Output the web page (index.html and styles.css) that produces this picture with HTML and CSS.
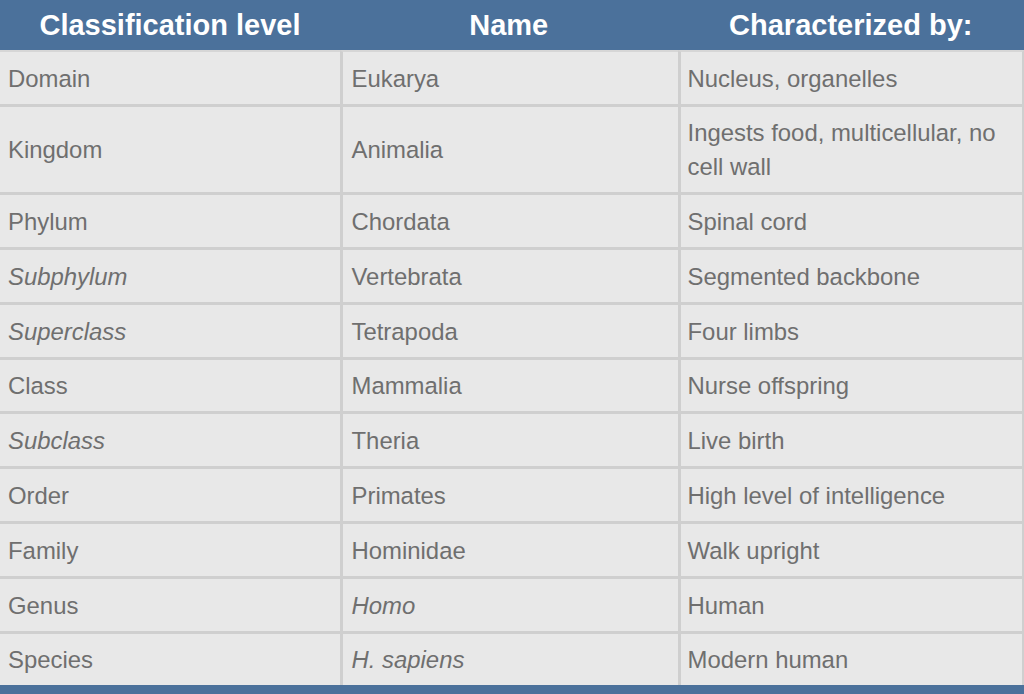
FILE: index.html
```html
<!DOCTYPE html>
<html>
<head>
<meta charset="utf-8">
<link rel="stylesheet" href="styles.css">
</head>
<body>
<table class="taxa">
  <colgroup>
    <col class="c1">
    <col class="c2">
    <col class="c3">
  </colgroup>
  <thead>
    <tr>
      <th>Classification level</th>
      <th>Name</th>
      <th>Characterized by:</th>
    </tr>
  </thead>
  <tbody>
    <tr><td>Domain</td><td>Eukarya</td><td>Nucleus, organelles</td></tr>
    <tr class="tall"><td>Kingdom</td><td>Animalia</td><td>Ingests food, multicellular, no cell wall</td></tr>
    <tr><td>Phylum</td><td>Chordata</td><td>Spinal cord</td></tr>
    <tr><td><em>Subphylum</em></td><td>Vertebrata</td><td>Segmented backbone</td></tr>
    <tr><td><em>Superclass</em></td><td>Tetrapoda</td><td>Four limbs</td></tr>
    <tr><td>Class</td><td>Mammalia</td><td>Nurse offspring</td></tr>
    <tr><td><em>Subclass</em></td><td>Theria</td><td>Live birth</td></tr>
    <tr><td>Order</td><td>Primates</td><td>High level of intelligence</td></tr>
    <tr><td>Family</td><td>Hominidae</td><td>Walk upright</td></tr>
    <tr><td>Genus</td><td><em>Homo</em></td><td>Human</td></tr>
    <tr><td>Species</td><td><em>H. sapiens</em></td><td>Modern human</td></tr>
  </tbody>
</table>
<div class="footer-band"></div>
</body>
</html>
```
FILE: styles.css
```css
html, body {
  margin: 0;
  padding: 0;
  background: #e8e8e8;
}

body {
  font-family: "Liberation Sans", Arial, Helvetica, sans-serif;
  width: 1024px;
  height: 694px;
  overflow: hidden;
}

.taxa {
  width: 1024px;
  border-collapse: separate;
  border-spacing: 0;
  table-layout: fixed;
}

.c1 { width: 340px; }
.c2 { width: 337.5px; }
.c3 { width: 346.5px; }

.taxa th {
  background: #4b719b;
  color: #ffffff;
  font-weight: bold;
  font-size: 29px;
  height: 50px;
  padding: 0 8px;
  text-align: center;
  vertical-align: middle;
  line-height: 50px;
  white-space: nowrap;
  box-sizing: border-box;
}

.taxa td {
  background: #e8e8e8;
  color: #6f6f6f;
  font-size: 23.9px;
  line-height: 34px;
  padding: 9.8px 8px 8px 8px;
  height: 34px;
  box-sizing: content-box;
  vertical-align: middle;
  border-top: 3px solid #cfcfcf;
  border-left: 3px solid #cfcfcf;
  text-align: left;
}

.taxa tr.tall td {
  height: 68px;
  padding-top: 9.5px;
  padding-bottom: 8px;
}

.taxa td:first-child {
  border-left: none;
  padding-left: 8px;
}

.taxa td:nth-child(2) {
  padding-left: 8.5px;
}

.taxa td:last-child {
  border-right: 2px solid #cfcfcf;
  padding-left: 7px;
  padding-right: 6px;
}

.taxa tbody tr:first-child td {
  border-top: 2px solid #d6d6d6;
}

.taxa em {
  font-style: italic;
}

.footer-band {
  height: 12px;
  background: #4b719b;
}
```
